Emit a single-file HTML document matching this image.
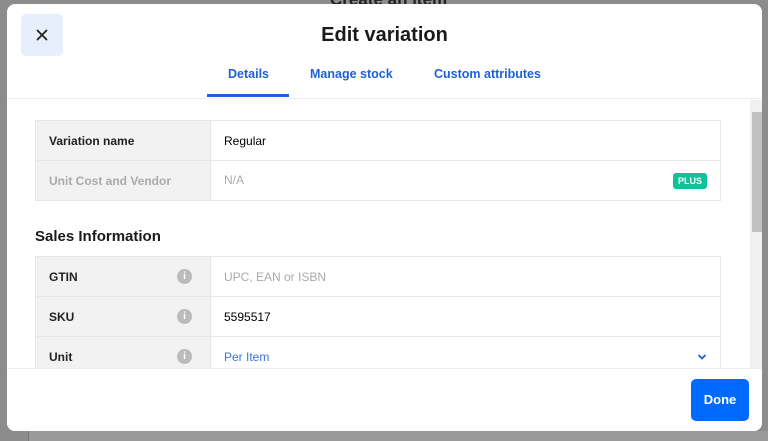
<!DOCTYPE html>
<html><head><style>
*{box-sizing:border-box;margin:0;padding:0}
body{width:768px;height:437px;background:#8c8c8c;font-family:"Liberation Sans",sans-serif;position:relative;overflow:hidden}
.top{position:absolute;left:330px;top:-10px;font-size:17px;font-weight:bold;color:#222}
.under{position:absolute;left:28px;top:431px;width:740px;height:10px;background:#999;border-left:1px solid #777}
.modal{position:absolute;left:7px;top:4px;width:755px;height:427px;background:#fff;border-radius:8px;overflow:hidden}
.close{position:absolute;left:14px;top:10px;width:42px;height:42px;background:#e6effb;border-radius:5px}
.title{position:absolute;left:0;width:755px;top:20px;text-align:center;font-size:20px;font-weight:bold;color:#1a1a1a}
.tab{position:absolute;top:63px;font-size:12.5px;font-weight:bold;color:#1e62d6}
.ul{position:absolute;left:200px;top:90px;width:82px;height:3px;background:#1e62d6}
.hb{position:absolute;left:0;top:94px;width:755px;height:1px;background:#eee}
.sb{position:absolute;left:743px;top:96px;width:12px;height:268px;background:#f0f0f0}
.thumb{position:absolute;left:745px;top:108px;width:10px;height:120px;background:#c1c1c1}
table{position:absolute;left:28px;border-collapse:collapse;width:686px;font-size:12px}
td{border:1px solid #e6e6e6;height:40px;padding:0 13px}
td.l{background:#f2f2f2;width:175px;color:#222;font-weight:bold;position:relative}
.g{color:#aaa!important}
.i{position:absolute;right:18px;top:12px;width:15px;height:15px;border-radius:50%;background:#bbb;color:#fff;font-size:10px;text-align:center;line-height:15px;font-weight:bold}
.plus{float:right;background:#10c19a;color:#fff;font-size:9px;font-weight:bold;padding:3px 5px;border-radius:3px}
h3{position:absolute;left:28px;top:224px;font-size:15px;color:#1a1a1a}
.foot{position:absolute;left:0;top:364px;width:755px;height:63px;background:#fff;border-top:1px solid #eee}
.done{position:absolute;left:684px;top:375px;width:58px;height:42px;background:#006aff;border-radius:5px;color:#fff;font-weight:bold;font-size:13px;text-align:center;line-height:42px}
</style></head><body>
<div class="top">Create an item</div>
<div class="under"></div>
<div class="modal">
<div class="close"><svg width="42" height="42"><path d="M16.5 16.5l9 9M25.5 16.5l-9 9" stroke="#222" stroke-width="1.8" stroke-linecap="round"/></svg></div>
<div class="title">Edit variation</div>
<div class="tab" style="left:221px">Details</div>
<div class="tab" style="left:303px">Manage stock</div>
<div class="tab" style="left:427px">Custom attributes</div>
<div class="ul"></div><div class="hb"></div>
<table style="top:116px">
<tr><td class="l">Variation name</td><td>Regular</td></tr>
<tr><td class="l g">Unit Cost and Vendor</td><td class="g">N/A<span class="plus">PLUS</span></td></tr>
</table>
<h3>Sales Information</h3>
<table style="top:252px">
<tr><td class="l">GTIN<span class="i">i</span></td><td class="g">UPC, EAN or ISBN</td></tr>
<tr><td class="l">SKU<span class="i">i</span></td><td>5595517</td></tr>
<tr><td class="l">Unit<span class="i">i</span></td><td style="color:#3a74d8">Per Item<svg style="float:right;margin-top:3px" width="10" height="8"><path d="M1.5 2l3.5 3.5 3.5-3.5" stroke="#1e62d6" stroke-width="1.8" fill="none"/></svg></td></tr>
</table>
<div class="sb"></div><div class="thumb"></div>
<div class="foot"></div>
<div class="done">Done</div>
</div>
</body></html>
